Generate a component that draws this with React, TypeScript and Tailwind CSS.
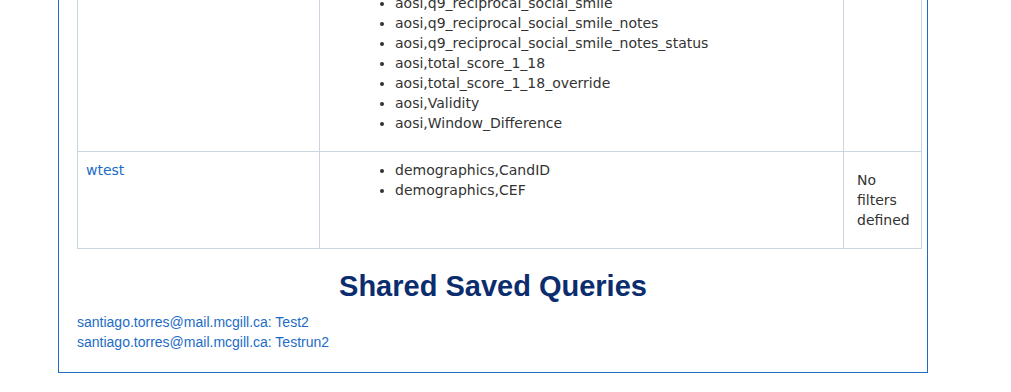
import React from "react";

const row1 = [
  "aosi,q9_reciprocal_social_smile",
  "aosi,q9_reciprocal_social_smile_notes",
  "aosi,q9_reciprocal_social_smile_notes_status",
  "aosi,total_score_1_18",
  "aosi,total_score_1_18_override",
  "aosi,Validity",
  "aosi,Window_Difference",
];

const row2 = ["demographics,CandID", "demographics,CEF"];

const tableFont = { fontFamily: '"DejaVu Sans", Verdana, sans-serif' };

export default function App() {
  return (
    <div className="w-full h-[392px] overflow-hidden bg-white">
      <div
        className="ml-[58px] w-[870px] -mt-[7px] border-x border-b border-[#1f6cc4] pl-[18px] pb-[20px]"
        style={{ fontFamily: '"Liberation Sans", Arial, Helvetica, sans-serif' }}
      >
        <table
          className="w-[844px] table-fixed border-collapse text-[14px] leading-[20px] text-[#333333]"
          style={tableFont}
        >
          <colgroup>
            <col className="w-[242px]" />
            <col className="w-[524px]" />
            <col className="w-[78px]" />
          </colgroup>
          <tbody>
            <tr>
              <td className="border-x border-b border-[#c9d6e0] align-top px-2 pt-0 pb-2"></td>
              <td className="border-x border-b border-[#c9d6e0] align-top px-2 pt-0 pb-2">
                <ul className="list-disc list-outside pl-[67px] mb-[10px]">
                  {row1.map((t) => (
                    <li key={t}>{t}</li>
                  ))}
                </ul>
              </td>
              <td className="border-x border-b border-[#c9d6e0] align-top"></td>
            </tr>
            <tr>
              <td className="border border-[#c9d6e0] align-top px-2 pt-2 pb-2">
                <a className="text-[#1c6cc6]" href="#">
                  wtest
                </a>
              </td>
              <td className="border border-[#c9d6e0] align-top px-2 pt-2 pb-2">
                <ul className="list-disc list-outside pl-[67px]">
                  {row2.map((t) => (
                    <li key={t}>{t}</li>
                  ))}
                </ul>
              </td>
              <td className="border border-[#c9d6e0] align-top pl-[13px] pr-[6px] pt-[18px] pb-[18px]">
                No filters defined
              </td>
            </tr>
          </tbody>
        </table>
        <h2 className="mt-[21px] pr-[18px] text-center text-[29px] leading-[33px] font-bold text-[#0b2d6d]">
          Shared Saved Queries
        </h2>
        <div className="mt-[9px] text-[14px] leading-[20px] text-[#1c6cc6]">
          <div>
            <a href="#">santiago.torres@mail.mcgill.ca: Test2</a>
          </div>
          <div>
            <a href="#">santiago.torres@mail.mcgill.ca: Testrun2</a>
          </div>
        </div>
      </div>
    </div>
  );
}
